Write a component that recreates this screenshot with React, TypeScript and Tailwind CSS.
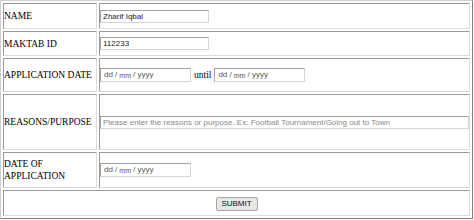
import React from "react";

const cell =
  "border border-t-[#9a9a9a] border-l-[#9a9a9a] border-r-[#dcdcdc] border-b-[#dcdcdc] p-0 align-middle";
const label = `${cell} w-[94px] text-[9.5px] leading-[12px] text-black`;
const input =
  "block h-[13px] border border-t-[#a3a3a3] border-l-[#a3a3a3] border-r-[#d6d6d6] border-b-[#d6d6d6] bg-white px-[2px] text-[8px] leading-[11px] text-[#222] outline-none font-['Liberation_Sans',Arial,sans-serif] placeholder:text-[#8a8a8a]";

function DateBox() {
  return (
    <div className="flex h-[14px] w-[91px] items-center border border-t-[#a3a3a3] border-l-[#a3a3a3] border-r-[#d6d6d6] border-b-[#d6d6d6] bg-white px-[3px] font-['Liberation_Sans',Arial,sans-serif] text-[8px] leading-none text-[#555]">
      dd / <span className="mx-[2px] text-[7px]">mm</span> / yyyy
    </div>
  );
}

export default function App() {
  return (
    <div className="bg-white font-['Liberation_Serif','Times_New_Roman',serif]">
      <table className="w-[473px] border-separate border-spacing-[2px] border border-t-[#cfcfcf] border-l-[#cfcfcf] border-r-[#7e7e7e] border-b-[#7e7e7e]">
        <tbody>
          <tr className="h-[26px]">
            <td className={label}>NAME</td>
            <td className={cell}>
              <input className={`${input} w-[109px]`} defaultValue="Zharif Iqbal" />
            </td>
          </tr>
          <tr className="h-[25px]">
            <td className={label}>MAKTAB ID</td>
            <td className={cell}>
              <input className={`${input} w-[109px]`} defaultValue="112233" />
            </td>
          </tr>
          <tr className="h-[34px]">
            <td className={`${label} whitespace-nowrap`}>APPLICATION DATE</td>
            <td className={cell}>
              <div className="flex items-center gap-[3px] text-[9.5px] text-black">
                <DateBox />
                <span>until</span>
                <DateBox />
              </div>
            </td>
          </tr>
          <tr className="h-[56px]">
            <td className={`${label} whitespace-nowrap`}>REASONS/PURPOSE</td>
            <td className={cell}>
              <input
                className={`${input} w-full`}
                placeholder="Please enter the reasons or purpose. Ex: Football Tournament/Going out to Town"
              />
            </td>
          </tr>
          <tr className="h-[36px]">
            <td className={label}>
              DATE OF
              <br />
              APPLICATION
            </td>
            <td className={cell}>
              <DateBox />
            </td>
          </tr>
          <tr className="h-[22px]">
            <td colSpan={2} className={`${cell} text-center`}>
              <button
                type="button"
                className="inline-block h-[14px] w-[42px] rounded-[2px] border border-[#a8a8a8] bg-[#e6e6e6] font-['Liberation_Sans',Arial,sans-serif] text-[8px] leading-[12px] text-[#111] align-middle"
              >
                SUBMIT
              </button>
            </td>
          </tr>
        </tbody>
      </table>
    </div>
  );
}
